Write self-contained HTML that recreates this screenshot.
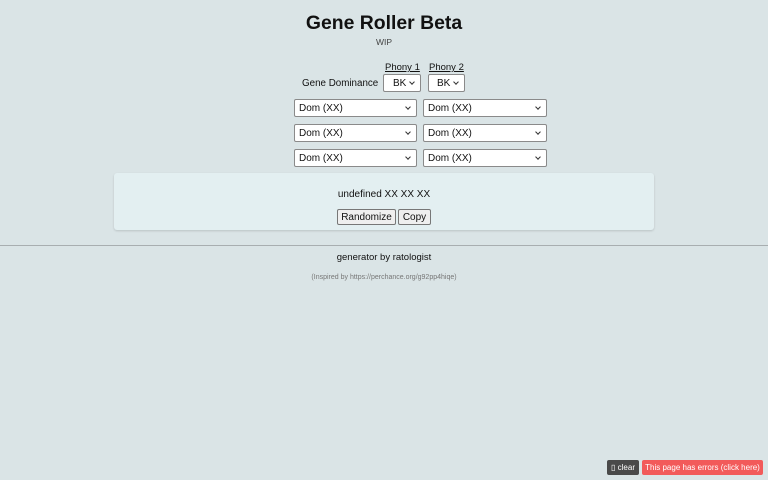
<!DOCTYPE html>
<html><head><style>
body{margin:0;width:768px;height:480px;background:#dae4e6;font-family:"Liberation Sans",sans-serif;position:relative;overflow:hidden;color:#111}
.a{position:absolute;white-space:nowrap}
.sel{position:absolute;background:#fff;border:1px solid #8a8a8a;border-radius:2px;box-sizing:border-box;height:18px;font-size:10px;line-height:17px;padding-left:4px;color:#111}
.sel:after{content:"";position:absolute;right:6px;top:5px;width:3px;height:3px;border-right:1.3px solid #333;border-bottom:1.3px solid #333;transform:rotate(45deg)}
.btn{position:absolute;background:#efefef;border:1px solid #777;border-radius:2px;box-sizing:border-box;height:16px;font-size:10px;line-height:15px;text-align:center}
</style></head><body>
<div class="a" style="left:0;width:768px;text-align:center;top:12px;font-size:19.4px;font-weight:bold">Gene Roller Beta</div>
<div class="a" style="left:0;width:768px;text-align:center;top:37px;font-size:8.5px;color:#444">WIP</div>
<div class="a" style="left:385px;top:62px;font-size:9.5px;text-decoration:underline">Phony 1</div>
<div class="a" style="left:429px;top:62px;font-size:9.5px;text-decoration:underline">Phony 2</div>
<div class="a" style="left:302px;top:78px;font-size:9.8px">Gene Dominance</div>
<div class="sel" style="left:383px;top:74px;width:38px;padding-left:9px">BK</div>
<div class="sel" style="left:428px;top:74px;width:37px;padding-left:8px">BK</div>
<div class="sel" style="left:294px;top:99px;width:123px">Dom (XX)</div>
<div class="sel" style="left:423px;top:99px;width:124px">Dom (XX)</div>
<div class="sel" style="left:294px;top:124px;width:123px">Dom (XX)</div>
<div class="sel" style="left:423px;top:124px;width:124px">Dom (XX)</div>
<div class="sel" style="left:294px;top:149px;width:123px">Dom (XX)</div>
<div class="sel" style="left:423px;top:149px;width:124px">Dom (XX)</div>
<div class="a" style="left:114px;top:173px;width:540px;height:57px;background:#e3eff1;border-radius:3px;box-shadow:0 1px 2px rgba(0,0,0,.15)"></div>
<div class="a" style="left:0;width:768px;text-align:center;top:189px;font-size:10px">undefined XX XX XX</div>
<div class="btn" style="left:337px;top:209px;width:59px">Randomize</div>
<div class="btn" style="left:398px;top:209px;width:33px">Copy</div>
<div class="a" style="left:0;top:245px;width:768px;height:1px;background:#a8aeb0"></div>
<div class="a" style="left:0;width:768px;text-align:center;top:252px;font-size:9.5px">generator by ratologist</div>
<div class="a" style="left:0;width:768px;text-align:center;top:274px;font-size:7px;color:#777">(Inspired by https://perchance.org/g92pp4hiqe)</div>
<div class="a" style="left:607px;top:460px;width:32px;height:15px;background:#4a4a4a;border-radius:2px;color:#fff;font-size:8px;line-height:15px;text-align:center">▯ clear</div>
<div class="a" style="left:642px;top:460px;width:121px;height:15px;background:#f25a5a;border-radius:2px;color:#fff;font-size:8px;line-height:15px;text-align:center">This page has errors (click here)</div>
</body></html>
